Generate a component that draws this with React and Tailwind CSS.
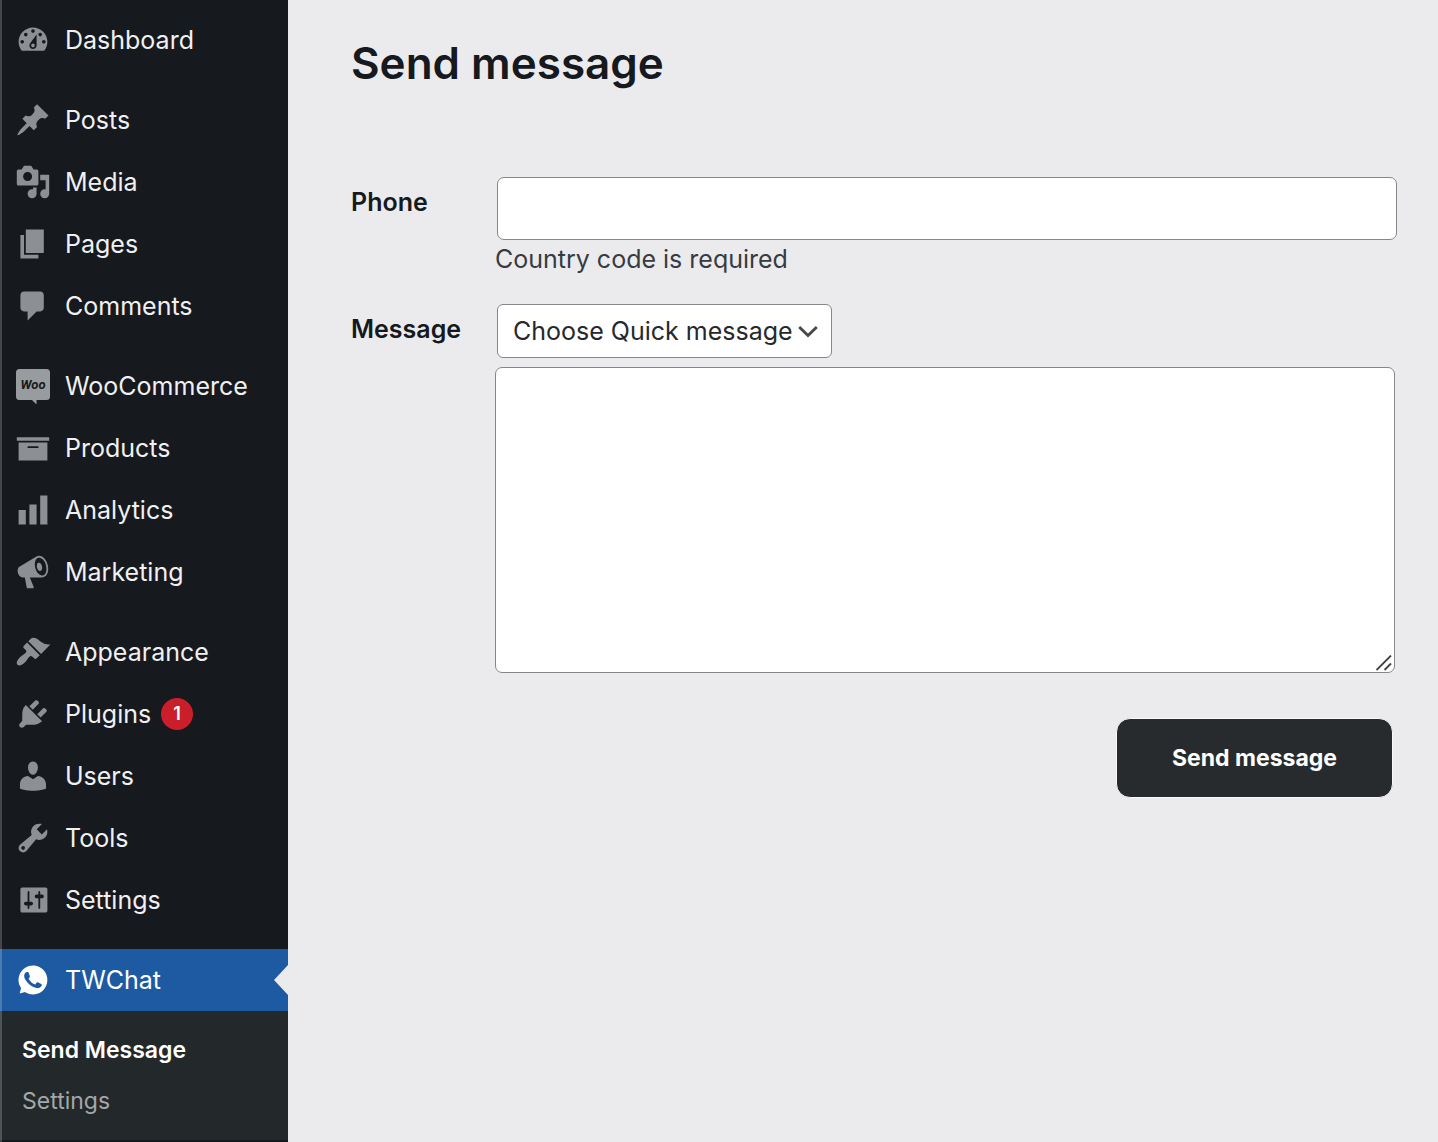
import { useState } from 'react'

const ICONS = {
  dashboard: 'M3.76 16h12.48c1.1-1.37 1.76-3.11 1.76-5 0-4.42-3.58-8-8-8s-8 3.58-8 8c0 1.89.66 3.63 1.76 5zM10 4c.55 0 1 .45 1 1s-.45 1-1 1-1-.45-1-1 .45-1 1-1zM6 6c.55 0 1 .45 1 1s-.45 1-1 1-1-.45-1-1 .45-1 1-1zM14 6c.55 0 1 .45 1 1s-.45 1-1 1-1-.45-1-1 .45-1 1-1zm-5.37 5.55L12 7v6c0 1.1-.9 2-2 2s-2-.9-2-2c0-.57.24-1.08.63-1.45zM4 10c.55 0 1 .45 1 1s-.45 1-1 1-1-.45-1-1 .45-1 1-1zm12 0c.55 0 1 .45 1 1s-.45 1-1 1-1-.45-1-1 .45-1 1-1zm-5 3c0-.55-.45-1-1-1s-1 .45-1 1 .45 1 1 1 1-.45 1-1z',
  posts: 'M10.44 3.02l1.82-1.82 6.36 6.35-1.83 1.82c-1.05-.68-2.48-.57-3.41.36l-.75.75c-.92.93-1.04 2.35-.35 3.41l-1.83 1.82-2.41-2.41-2.8 2.79c-.42.42-3.38 2.71-3.8 2.29s1.86-3.39 2.28-3.81l2.79-2.79L4.1 9.36l1.83-1.82c1.05.69 2.48.57 3.4-.36l.75-.75c.93-.92 1.05-2.35.36-3.41z',
  media: 'M13 11V4c0-.55-.45-1-1-1h-1.67L9 1H5L3.67 3H2c-.55 0-1 .45-1 1v7c0 .55.45 1 1 1h10c.55 0 1-.45 1-1zM7 4.5c1.38 0 2.5 1.12 2.5 2.5S8.38 9.5 7 9.5 4.5 8.38 4.5 7 5.62 4.5 7 4.5zM14 6h5v10.5c0 1.38-1.12 2.5-2.5 2.5S14 17.88 14 16.5s1.12-2.5 2.5-2.5c.17 0 .34.02.5.05V9h-3V6zm-4 8.05V13h2v3.5c0 1.38-1.12 2.5-2.5 2.5S7 17.88 7 16.5 8.12 14 9.5 14c.17 0 .34.02.5.05z',
  pages: 'M6 15V2h10v13H6zm-1 1h8v2H3V5h2v11z',
  comments: 'M5 2h9c1.1 0 2 .9 2 2v7c0 1.1-.9 2-2 2h-2l-5 5v-5H5c-1.1 0-2-.9-2-2V4c0-1.1.9-2 2-2z',
  products: 'M19 4v2H1V4h18zM2 7h16v10H2V7zm11 3V9H7v1h6z',
  analytics: 'M18 18V2h-4v16h4zm-6 0V7H8v11h4zm-6 0v-8H2v8h4z',
  marketing: 'M18.15 5.94c.46 1.62.38 3.22-.02 4.48-.42 1.28-1.26 2.18-2.3 2.48-.16.06-.26.06-.4.06-.06.02-.12.02-.18.02-.06.02-.14.02-.22.02h-6.8l2.22 5.5c.02.14-.06.26-.14.34-.08.1-.24.16-.34.16H6.95c-.1 0-.26-.06-.34-.16-.08-.08-.16-.2-.14-.34l-1-5.5H4.25l-.02-.02c-.5.06-1.08-.18-1.54-.62s-.88-1.08-1.06-1.88c-.24-.8-.2-1.56-.02-2.2.18-.62.58-1.08 1.06-1.3l.02-.02 9-5.4c.1-.06.18-.1.24-.16.06-.04.14-.08.24-.12.16-.08.28-.12.5-.18 1.04-.3 2.24.1 3.22.98s1.84 2.24 2.26 3.86zm-2.58 5.98h-.02c.4-.1.74-.34 1.04-.7.58-.7.86-1.76.86-3.04 0-.64-.1-1.3-.28-1.98-.34-1.36-1.02-2.5-1.78-3.24s-1.68-1.1-2.46-.88c-.82.22-1.4.96-1.7 2-.32 1.04-.28 2.36.06 3.72.38 1.36 1 2.5 1.8 3.24.78.74 1.62 1.1 2.48.88zm-2.54-7.08c.22-.04.42-.02.62.04.38.16.76.48 1.02 1s.42 1.2.42 1.78c0 .3-.04.56-.12.8-.18.48-.44.84-.86.94-.34.1-.8-.06-1.14-.4s-.64-.86-.78-1.5c-.18-.62-.12-1.24.02-1.72s.48-.84.82-.94z',
  appearance: 'M14.48 11.06L7.41 3.99l1.5-1.5c.5-.56 2.3-.47 3.51.32 1.21.8 1.43 1.28 2.91 2.1 1.18.64 2.45 1.26 4.45.85zm-.71.71L6.7 4.7 4.93 6.47c-.39.39-.39 1.02 0 1.41l1.06 1.06c.39.39.39 1.03 0 1.42-.6.6-1.43 1.11-2.21 1.69-.35.26-.7.53-1.01.84C1.43 14.23.4 16.08 1.4 17.07c.99 1 2.84-.03 4.18-1.36.31-.31.58-.66.85-1.02.57-.78 1.08-1.61 1.69-2.21.39-.39 1.02-.39 1.41 0l1.06 1.06c.39.39 1.02.39 1.41 0z',
  plugins: 'M13.11 4.36L9.87 7.6 8 5.73l3.24-3.24c.35-.34 1.05-.2 1.56.32.52.51.66 1.21.31 1.55zm-8 1.77l.91-1.12 9.01 9.01-1.19.84c-.71.71-2.63 1.16-3.82 1.16H6.14L4.9 17.26c-.59.59-1.54.59-2.12 0-.59-.58-.59-1.53 0-2.12l1.24-1.24v-3.88c0-1.13.4-3.19 1.09-3.89zm7.26 3.97l3.24-3.24c.34-.35 1.04-.21 1.55.31.52.51.66 1.21.31 1.55l-3.24 3.25z',
  users: 'M10 9.25c-2.27 0-2.73-3.44-2.73-3.44C7 4.02 7.82 2 9.97 2c2.16 0 2.98 2.02 2.71 3.81 0 0-.41 3.44-2.68 3.44zm0 2.57L12.72 10c2.39 0 4.52 2.33 4.52 4.53v2.49s-3.65 1.13-7.24 1.13c-3.65 0-7.24-1.13-7.24-1.13v-2.49c0-2.25 1.94-4.48 4.47-4.48z',
  tools: 'M16.68 9.77c-1.34 1.34-3.3 1.67-4.95.99l-5.41 6.52c-.99.99-2.59.99-3.58 0s-.99-2.59 0-3.57l6.52-5.42c-.68-1.65-.35-3.61.99-4.95 1.28-1.28 3.12-1.62 4.72-1.06l-2.89 2.89 2.82 2.82 2.86-2.87c.53 1.58.18 3.39-1.08 4.65zM3.81 16.21c.4.39 1.04.39 1.43 0 .4-.4.4-1.04 0-1.43-.39-.4-1.03-.4-1.43 0-.39.39-.39 1.03 0 1.43z',
  settings: 'M18 16V4c0-.55-.45-1-1-1H4c-.55 0-1 .45-1 1v12c0 .55.45 1 1 1h13c.55 0 1-.45 1-1zM8 11h1c.55 0 1 .45 1 1s-.45 1-1 1H8v1.5c0 .28-.22.5-.5.5s-.5-.22-.5-.5V13H6c-.55 0-1-.45-1-1s.45-1 1-1h1V5.5c0-.28.22-.5.5-.5s.5.22.5.5V11zm5-2h-1c-.55 0-1-.45-1-1s.45-1 1-1h1V5.5c0-.28.22-.5.5-.5s.5.22.5.5V7h1c.55 0 1 .45 1 1s-.45 1-1 1h-1v5.5c0 .28-.22.5-.5.5s-.5-.22-.5-.5V9z',
  whatsapp: 'M16.8 5.7C14.4 2 9.5.9 5.7 3.2 2 5.5.8 10.5 3.2 14.2l.2.3-.8 3 3-.8.3.2c1.3.7 2.7 1.1 4.1 1.1 1.5 0 3-.4 4.3-1.2 3.7-2.4 4.8-7.3 2.5-11.1zm-2.1 7.7c-.4.6-.9 1-1.6 1.1-.4 0-.9.2-2.9-.6-1.7-.8-3.1-2.1-4.1-3.6-.6-.7-.9-1.6-1-2.5 0-.8.3-1.5.8-2 .2-.2.4-.3.6-.3H7c.2 0 .4 0 .5.4.2.5.7 1.7.7 1.8.1.1.1.3 0 .4.1.2 0 .4-.1.5-.1.1-.2.3-.3.4-.2.1-.3.3-.2.5.4.6.9 1.2 1.4 1.7.6.5 1.2.9 1.9 1.2.2.1.4.1.5-.1s.6-.7.8-.9c.2-.2.3-.2.5-.1l1.6.8c.2.1.4.2.5.3.1.3.1.7-.1 1z',
}

const MENU_GROUPS = [
  [{ icon: 'dashboard', label: 'Dashboard' }],
  [
    { icon: 'posts', label: 'Posts' },
    { icon: 'media', label: 'Media' },
    { icon: 'pages', label: 'Pages' },
    { icon: 'comments', label: 'Comments' },
  ],
  [
    { icon: 'woo', label: 'WooCommerce' },
    { icon: 'products', label: 'Products' },
    { icon: 'analytics', label: 'Analytics' },
    { icon: 'marketing', label: 'Marketing' },
  ],
  [
    { icon: 'appearance', label: 'Appearance' },
    { icon: 'plugins', label: 'Plugins', count: 1 },
    { icon: 'users', label: 'Users' },
    { icon: 'tools', label: 'Tools' },
    { icon: 'settings', label: 'Settings' },
  ],
  [{ icon: 'whatsapp', label: 'TWChat', active: true }],
]

const SUBMENU = [
  { label: 'Send Message', current: true },
  { label: 'Settings' },
]

function MenuIcon({ name }) {
  if (name === 'woo') {
    return (
      <svg viewBox="0 0 36 36" className="size-9 shrink-0" aria-hidden="true">
        <path
          fill="#999c9f"
          d="M4.500 1h27A3.500 3.500 0 0 1 35 4.500v24a3.500 3.500 0 0 1-3.500 3.500H21.500v4.500L17 32H4.500A3.500 3.500 0 0 1 1 28.500v-24A3.500 3.500 0 0 1 4.500 1z"
        />
        <text
          x="18"
          y="21"
          textAnchor="middle"
          fontFamily="Roboto, sans-serif"
          fontSize="13"
          fontWeight="700"
          fontStyle="italic"
          fill="#16191d"
        >
          Woo
        </text>
      </svg>
    )
  }
  return (
    <svg viewBox="0 0 20 20" className="size-9 shrink-0" fill="currentColor" aria-hidden="true">
      <path fillRule="evenodd" d={ICONS[name]} />
    </svg>
  )
}

function MenuItem({ item }) {
  return (
    <li>
      <a
        href="#"
        className={`relative flex h-[62px] items-center pl-[15px] ${
          item.active ? 'bg-[#1d5aa2] text-white' : 'text-[#f0f0f1]'
        }`}
      >
        <span className={`mr-[14px] ${item.active ? 'text-white' : 'text-[#8c8f94]'}`}>
          <MenuIcon name={item.icon} />
        </span>
        {item.label}
        {item.count && (
          <span className="ml-2.5 flex size-8 items-center justify-center rounded-full bg-[#ca1f2b] text-[18px] font-semibold text-white">
            {item.count}
          </span>
        )}
        {item.active && (
          <span className="absolute top-4 right-0 border-y-[15px] border-r-[14px] border-y-transparent border-r-[#ebebed]" />
        )}
      </a>
    </li>
  )
}

function Sidebar() {
  return (
    <aside className="relative w-72 shrink-0 bg-[#16191d] pt-[9px] pb-[2px] text-[25px] leading-8">
      <nav>
        <div className="flex flex-col gap-[18px]">
          {MENU_GROUPS.map(group => (
            <ul key={group[0].label}>
              {group.map(item => (
                <MenuItem key={item.label} item={item} />
              ))}
            </ul>
          ))}
        </div>
        <ul className="bg-[#23282b] pt-[13px] pb-[14px] text-[23px]">
          {SUBMENU.map(item => (
            <li key={item.label}>
              <a
                href="#"
                className={`flex h-[51px] items-center pl-[22px] ${
                  item.current ? 'font-semibold text-white' : 'text-[#a4a7aa]'
                }`}
              >
                {item.label}
              </a>
            </li>
          ))}
        </ul>
      </nav>
      <div className="pointer-events-none absolute inset-y-0 left-0 w-[2px] bg-white/20" />
    </aside>
  )
}

function SendMessageForm() {
  const [phone, setPhone] = useState('')
  const [message, setMessage] = useState('')

  return (
    <form className="mt-[86px] text-[25px] leading-8" onSubmit={e => e.preventDefault()}>
      <div className="grid grid-cols-[144px_1fr]">
        <label htmlFor="phone" className="pt-[9px] font-semibold text-[#16191d]">Phone</label>
        <div>
          <input
            id="phone"
            type="text"
            value={phone}
            onChange={e => setPhone(e.target.value)}
            className="ml-[2px] block h-[63px] w-[calc(100%-2px)] rounded-[7px] border border-[#85878c] bg-white px-4"
          />
          <p className="mt-[3px] text-[#363c41]">Country code is required</p>
        </div>
      </div>

      <div className="mt-[29px] grid grid-cols-[144px_1fr]">
        <label htmlFor="message" className="pt-[9px] font-semibold text-[#16191d]">Message</label>
        <div>
          <div className="relative ml-[2px] w-fit">
            <select
              aria-label="Quick message"
              className="block h-[54px] w-[335px] appearance-none rounded-[6px] border border-[#85878c] bg-white pl-[15px] text-[#24292e]"
            >
              <option>Choose Quick message</option>
            </select>
            <svg
              viewBox="0 0 20 14"
              className="pointer-events-none absolute top-[21px] right-[14px] h-[14px] w-5"
              fill="none"
              stroke="#48494b"
              strokeWidth="3"
            >
              <path d="M1.200 2 10 10.500 18.800 2" />
            </svg>
          </div>
          <div className="relative mt-[9px] mr-[2px]">
            <textarea
              id="message"
              value={message}
              onChange={e => setMessage(e.target.value)}
              className="block h-[306px] w-full resize-none rounded-[7px] border border-[#85878c] bg-white px-4 py-2"
            />
            <svg
              viewBox="0 0 16 16"
              className="pointer-events-none absolute right-[3px] bottom-[2px] size-4"
              stroke="#3f4143"
              strokeWidth="1.800"
            >
              <path d="M.5 15 15 .5M8.500 15 15 8.500" />
            </svg>
          </div>
        </div>
      </div>

      <div className="mt-[45px] mr-1 flex justify-end">
        <button
          type="submit"
          className="h-20 w-[277px] rounded-[14px] border border-[#f8f8f9] bg-[#272b2e] text-[23px] font-bold text-white"
        >
          Send message
        </button>
      </div>
    </form>
  )
}

export default function App() {
  return (
    <div className="flex min-h-screen bg-[#ebebed] font-['Inter','Liberation_Sans',sans-serif]">
      <Sidebar />
      <main className="min-w-0 flex-1 pt-[35px] pr-[41px] pl-[63px]">
        <h1 className="text-[44px] leading-[56px] font-semibold text-[#16191d]">Send message</h1>
        <SendMessageForm />
      </main>
    </div>
  )
}
